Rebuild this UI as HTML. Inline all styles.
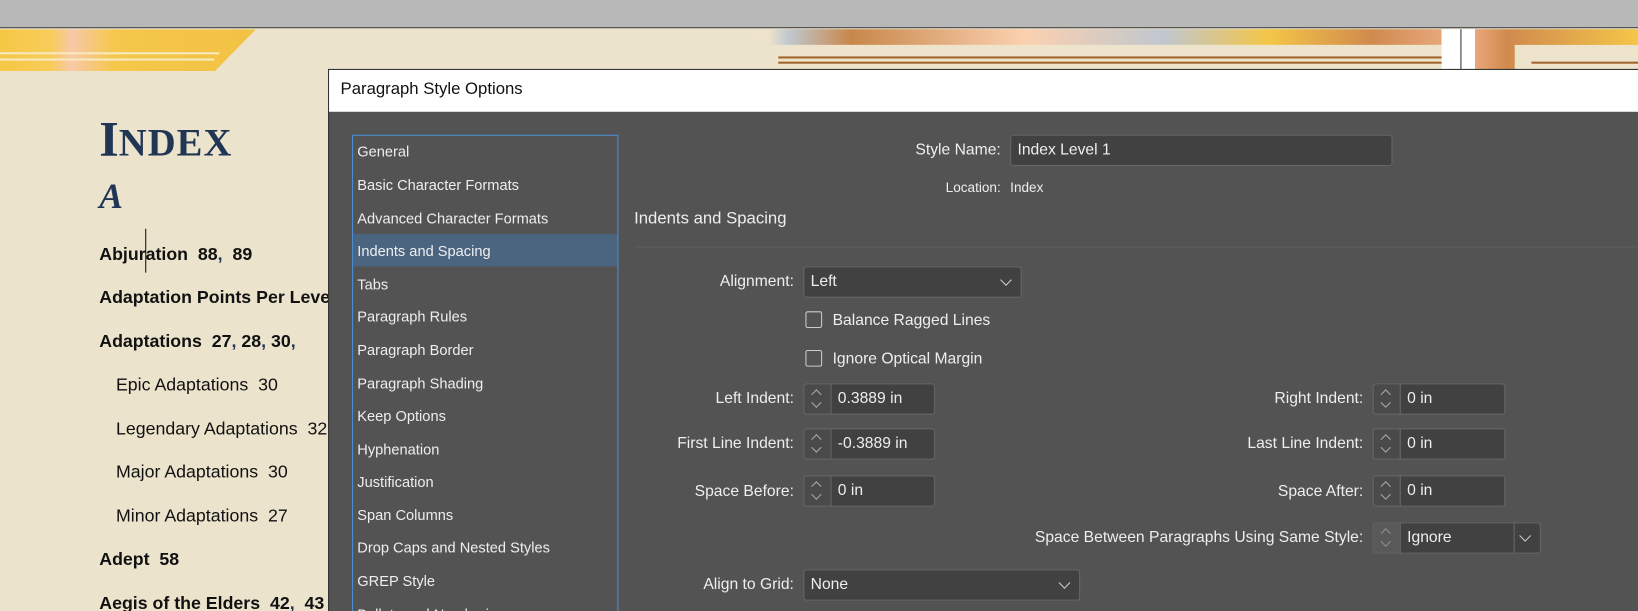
<!DOCTYPE html>
<html><head><style>
*{margin:0;padding:0;box-sizing:border-box}
html,body{width:1638px;height:611px;overflow:hidden}
body{position:relative;background:#ece3cd;font-family:"Liberation Sans",sans-serif}
#w{position:absolute;left:0;top:0;width:1568px;height:585px;transform:scale(1.04464);transform-origin:0 0;overflow:hidden}
.a{position:absolute}
.top{left:0;top:0;width:1568px;height:27px;background:#b8b8b8;border-bottom:1px solid #444}
.pg{font-family:"Liberation Sans",sans-serif;color:#111;font-size:17px;white-space:nowrap}
.b{font-weight:bold}
.dlg{left:314px;top:66px;width:1260px;height:519px;background:#535353;border-left:1px solid #333;border-top:1px solid #333}
.tt{left:0;top:0;width:100%;height:40px;background:#fff;font-size:16px;color:#111;padding:10px 0 0 11px}
.list{left:337px;top:129px;width:255px;height:470px;border:1px solid #4a8fd6;background:#535353}
.li{position:absolute;left:5px;color:#eee;font-size:14px}
.sel{left:338px;top:224px;width:253px;height:31px;background:#4b6581}
.lbl{color:#eee;font-size:15px;white-space:nowrap;text-align:right}
.inp{background:#414141;border:1px solid #666;border-radius:3px;color:#eee;font-size:15px;padding:5px 6px}
.spin{border:1px solid #666;border-radius:3px 0 0 3px;background:#4a4a4a}
.spin:before{content:"";position:absolute;left:8px;top:6px;width:6px;height:6px;border-left:1px solid #aaa;border-top:1px solid #aaa;transform:rotate(45deg)}
.spin:after{content:"";position:absolute;left:8px;top:14px;width:6px;height:6px;border-right:1px solid #aaa;border-bottom:1px solid #aaa;transform:rotate(45deg)}
.dd:after{content:"";position:absolute;right:10px;top:8px;width:7px;height:7px;border-right:1px solid #ccc;border-bottom:1px solid #ccc;transform:rotate(45deg)}
.cb{width:16px;height:16px;border:1px solid #ccc;border-radius:2px}
</style></head><body><div id="w">
<div class="a top"></div>
<div class="a" style="left:0;top:28px;width:245px;height:40px;background:linear-gradient(90deg,#f6c744,#f8cc5a 20%,#f7c9a8 28%,#f5c74a 45%,#f2c243);clip-path:polygon(0 0,100% 0,84% 100%,0 100%)"></div>
<div class="a" style="left:0;top:50px;width:210px;height:2px;background:#f7e9c0"></div>
<div class="a" style="left:0;top:56px;width:205px;height:2px;background:#f7e9c0"></div>
<div class="a" style="left:715px;top:28px;width:665px;height:15px;background:linear-gradient(90deg,#eee4cc 3%,#c0c8cf 6%,#c8874a 15%,#fbd1b0 40%,#c0c7cf 60%,#f4c648 75%,#d08a4e 90%,#e7a77a)"></div>
<div class="a" style="left:740px;top:43px;width:640px;height:24px;background:#eee4cc"></div>
<div class="a" style="left:745px;top:54px;width:640px;height:2px;background:#a0662e"></div>
<div class="a" style="left:745px;top:59px;width:640px;height:2px;background:#a0662e"></div>
<div class="a" style="left:1380px;top:28px;width:32px;height:39px;background:#fff"></div>
<div class="a" style="left:1398px;top:28px;width:1px;height:39px;background:#333"></div>
<div class="a" style="left:1412px;top:28px;width:156px;height:39px;background:linear-gradient(90deg,#e9a67a,#d08a4e 20%,#f4c648)"></div>
<div class="a" style="left:1450px;top:43px;width:118px;height:24px;background:#eee4cc"></div>
<div class="a" style="left:1466px;top:59px;width:102px;height:2px;background:#a0662e"></div>

<div class="a" style="left:95px;top:106px;font-family:'Liberation Serif',serif;font-weight:bold;color:#213554;font-size:48px;letter-spacing:0px">I<span style="font-size:37px;letter-spacing:1px">NDEX</span></div>
<div class="a" style="left:95px;top:170px;font-family:'Liberation Serif',serif;font-weight:bold;font-style:italic;color:#213554;font-size:34px">A</div>
<div class="a" style="left:139px;top:219px;width:1px;height:42px;background:#111"></div>
<div class="a pg b" style="left:95px;top:234px">Abjuration&nbsp; 88<span style="color:#213554">,</span>&nbsp; 89</div>
<div class="a pg b" style="left:95px;top:275px">Adaptation Points Per Level</div>
<div class="a pg b" style="left:95px;top:317px">Adaptations&nbsp; 27<span style="color:#213554">,</span>&nbsp;28<span style="color:#213554">,</span>&nbsp;30<span style="color:#213554">,</span></div>
<div class="a pg" style="left:111px;top:359px">Epic Adaptations&nbsp; 30</div>
<div class="a pg" style="left:111px;top:401px">Legendary Adaptations&nbsp; 32</div>
<div class="a pg" style="left:111px;top:442px">Major Adaptations&nbsp; 30</div>
<div class="a pg" style="left:111px;top:484px">Minor Adaptations&nbsp; 27</div>
<div class="a pg b" style="left:95px;top:526px">Adept&nbsp; 58</div>
<div class="a pg b" style="left:95px;top:568px">Aegis of the Elders&nbsp; 42<span style="color:#213554">,</span>&nbsp; 43</div>

<div class="a dlg"><div class="a tt">Paragraph Style Options</div></div>
<div class="a list"></div>
<div class="a sel"></div>
<div class="a" style="left:337px;top:129px;width:255px;height:456px;overflow:hidden">
<div class="li" style="top:8px">General</div>
<div class="li" style="top:40px">Basic Character Formats</div>
<div class="li" style="top:72px">Advanced Character Formats</div>
<div class="li" style="top:103px">Indents and Spacing</div>
<div class="li" style="top:135px">Tabs</div>
<div class="li" style="top:166px">Paragraph Rules</div>
<div class="li" style="top:198px">Paragraph Border</div>
<div class="li" style="top:230px">Paragraph Shading</div>
<div class="li" style="top:261px">Keep Options</div>
<div class="li" style="top:293px">Hyphenation</div>
<div class="li" style="top:324px">Justification</div>
<div class="li" style="top:356px">Span Columns</div>
<div class="li" style="top:387px">Drop Caps and Nested Styles</div>
<div class="li" style="top:419px">GREP Style</div>
<div class="li" style="top:451px">Bullets and Numbering</div>
</div>

<div class="a lbl" style="right:610px;top:135px">Style Name:</div>
<div class="a inp" style="left:967px;top:129px;width:366px;height:30px">Index Level 1</div>
<div class="a lbl" style="right:610px;top:172px;font-size:13px">Location:</div>
<div class="a lbl" style="left:967px;top:172px;font-size:13px">Index</div>
<div class="a lbl" style="left:607px;top:201px;font-size:16px">Indents and Spacing</div>
<div class="a" style="left:607px;top:236px;width:961px;height:1px;background:#5e5e5e"></div>

<div class="a lbl" style="right:808px;top:261px">Alignment:</div>
<div class="a inp dd" style="left:769px;top:255px;width:209px;height:30px">Left</div>
<div class="a cb" style="left:771px;top:298px"></div>
<div class="a lbl" style="left:797px;top:298px">Balance Ragged Lines</div>
<div class="a cb" style="left:771px;top:335px"></div>
<div class="a lbl" style="left:797px;top:335px">Ignore Optical Margin</div>

<div class="a lbl" style="right:808px;top:373px">Left Indent:</div>
<div class="a spin" style="left:769px;top:367px;width:27px;height:30px"></div>
<div class="a inp" style="left:795px;top:367px;width:100px;height:30px;border-radius:0 3px 3px 0">0.3889 in</div>
<div class="a lbl" style="right:808px;top:416px">First Line Indent:</div>
<div class="a spin" style="left:769px;top:410px;width:27px;height:30px"></div>
<div class="a inp" style="left:795px;top:410px;width:100px;height:30px;border-radius:0 3px 3px 0">-0.3889 in</div>
<div class="a lbl" style="right:808px;top:462px">Space Before:</div>
<div class="a spin" style="left:769px;top:455px;width:27px;height:30px"></div>
<div class="a inp" style="left:795px;top:455px;width:100px;height:30px;border-radius:0 3px 3px 0">0 in</div>

<div class="a lbl" style="right:263px;top:373px">Right Indent:</div>
<div class="a spin" style="left:1314px;top:367px;width:27px;height:30px"></div>
<div class="a inp" style="left:1340px;top:367px;width:101px;height:30px;border-radius:0 3px 3px 0">0 in</div>
<div class="a lbl" style="right:263px;top:416px">Last Line Indent:</div>
<div class="a spin" style="left:1314px;top:410px;width:27px;height:30px"></div>
<div class="a inp" style="left:1340px;top:410px;width:101px;height:30px;border-radius:0 3px 3px 0">0 in</div>
<div class="a lbl" style="right:263px;top:462px">Space After:</div>
<div class="a spin" style="left:1314px;top:455px;width:27px;height:30px"></div>
<div class="a inp" style="left:1340px;top:455px;width:101px;height:30px;border-radius:0 3px 3px 0">0 in</div>
<div class="a lbl" style="right:263px;top:506px">Space Between Paragraphs Using Same Style:</div>
<div class="a spin" style="left:1314px;top:500px;width:27px;height:30px;background:#5c5c5c;opacity:.7"></div>
<div class="a inp" style="left:1340px;top:500px;width:110px;height:30px;border-radius:0">Ignore</div>
<div class="a inp dd" style="left:1449px;top:500px;width:26px;height:30px;border-radius:0 3px 3px 0"></div>

<div class="a lbl" style="right:808px;top:551px">Align to Grid:</div>
<div class="a inp dd" style="left:769px;top:545px;width:265px;height:30px">None</div>
</div></body></html>
